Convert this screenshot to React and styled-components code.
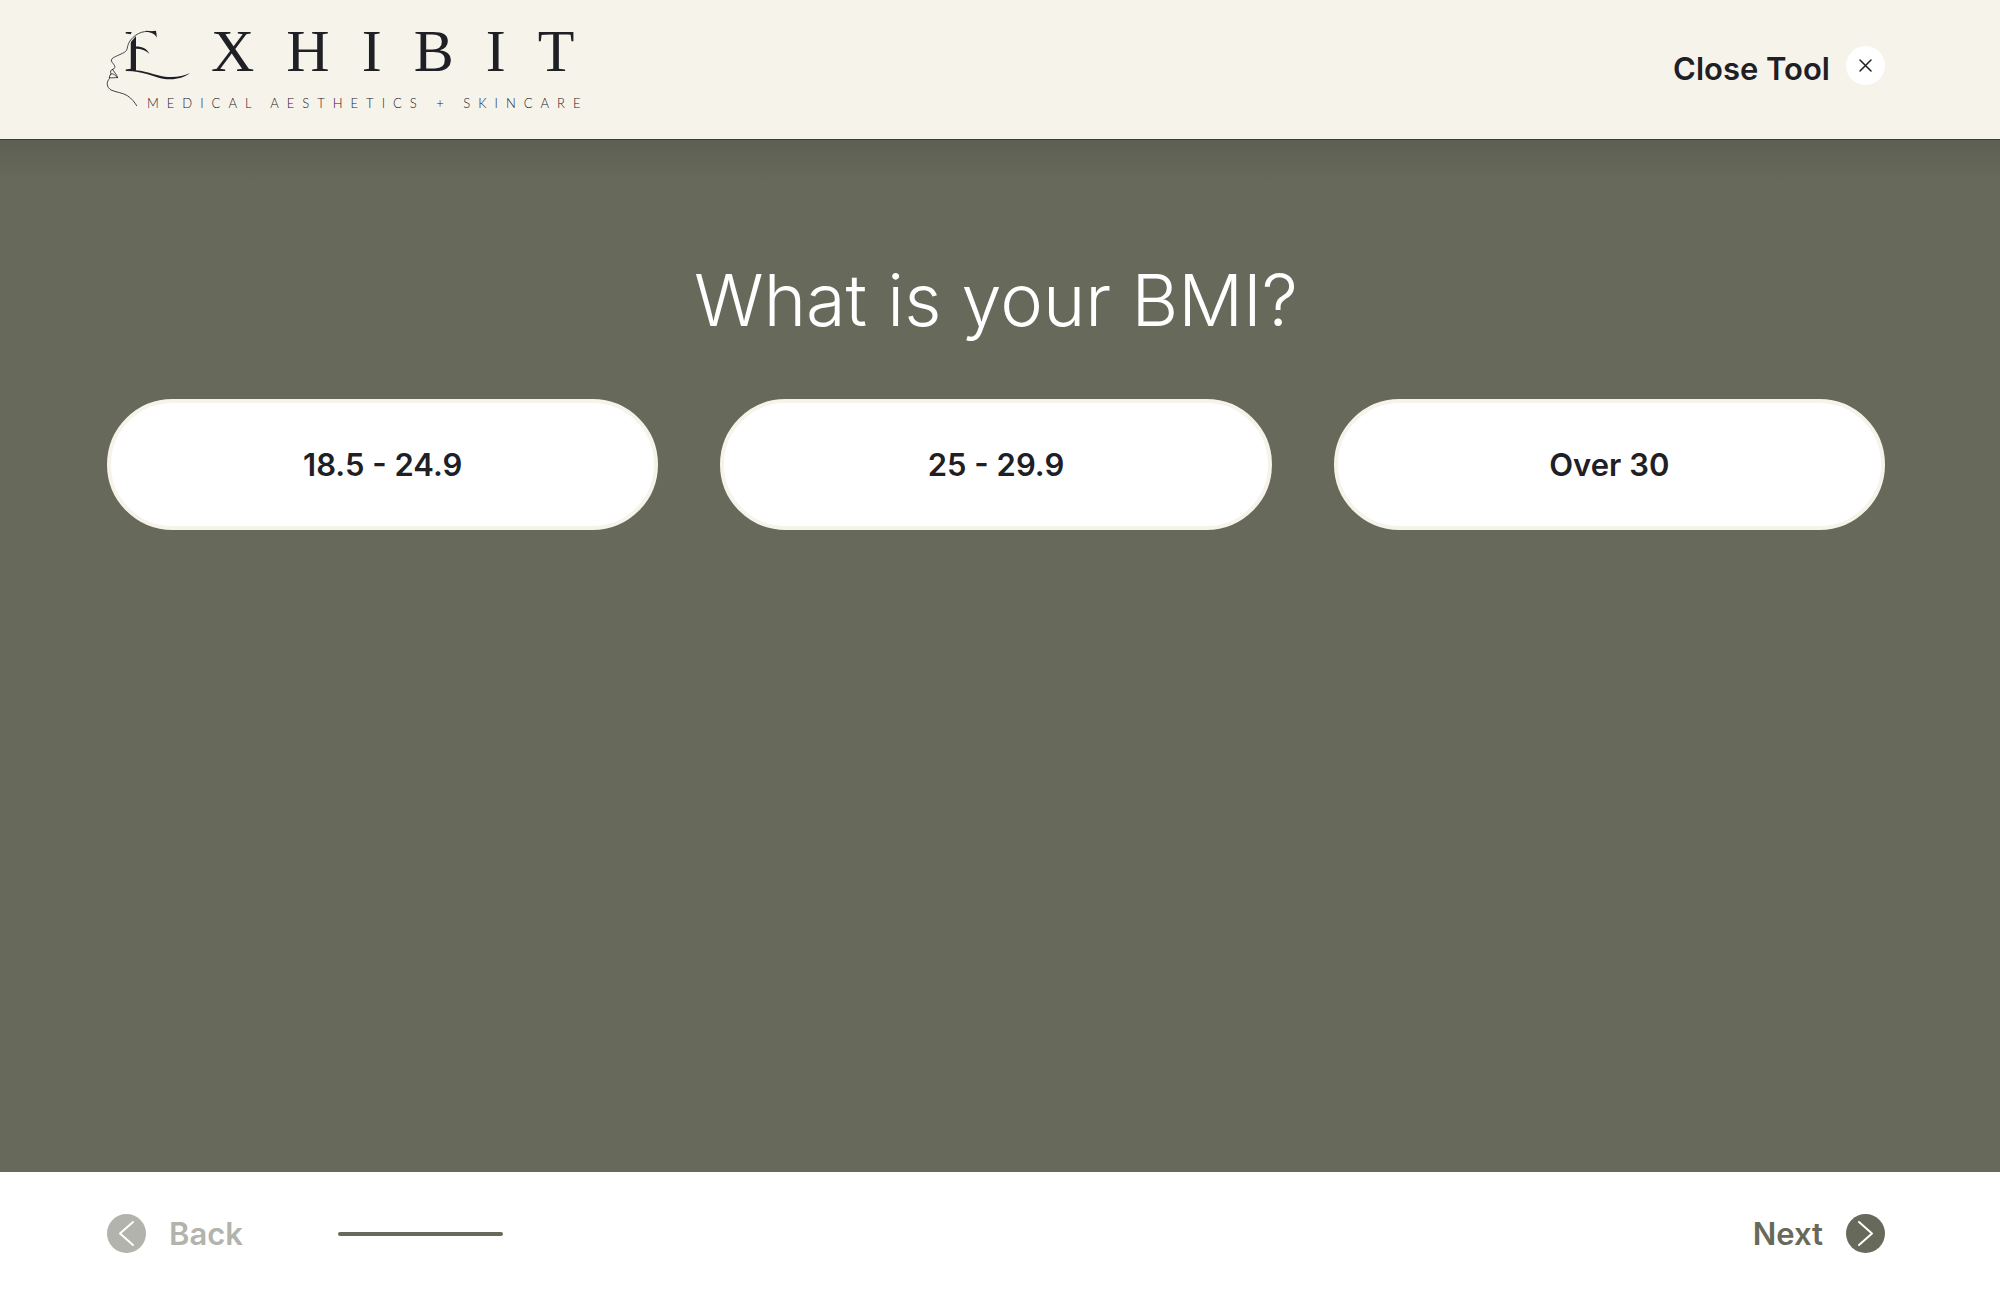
import { useState } from "react";
import styled, { createGlobalStyle } from "styled-components";

const GlobalStyle = createGlobalStyle`
  * {
    box-sizing: border-box;
  }
  body {
    margin: 0;
    font-family: Inter, "Liberation Sans", sans-serif;
    color: #1f2026;
  }
`;

const Page = styled.div`
  min-height: 100vh;
  display: flex;
  flex-direction: column;
`;

const Header = styled.header`
  display: flex;
  justify-content: space-between;
  align-items: flex-start;
  padding: 12px 115px 28px 106px;
  background: #f6f3eb;
`;

const Logo = styled.svg`
  display: block;
  width: 500px;
  height: 99px;
  color: #1f2026;
`;

const Wordmark = styled.text`
  font-family: "Liberation Serif", serif;
  font-size: 60px;
  letter-spacing: 32px;
  fill: currentColor;
`;

const Tagline = styled.text`
  font-family: Lato, sans-serif;
  font-size: 13px;
  font-weight: 300;
  letter-spacing: 8px;
  fill: currentColor;
`;

const NavButton = styled.button`
  display: flex;
  align-items: center;
  gap: ${(props) => props.$gap || "23px"};
  padding: 0;
  border: 0;
  background: none;
  font-family: inherit;
  font-size: 31px;
  font-weight: 600;
  line-height: 38px;
  color: ${(props) => props.$color || "#676a5b"};
  opacity: ${(props) => (props.disabled ? 0.5 : 1)};
  cursor: pointer;
`;

const CloseButton = styled(NavButton)`
  align-items: flex-start;
  margin-top: 34px;
  span {
    padding-top: 4px;
  }
`;

const Circle = styled.svg`
  display: block;
  width: 39px;
  height: 39px;
  flex-shrink: 0;
  border-radius: 50%;
  background: ${(props) => props.$bg || "#676a5b"};
  fill: none;
  stroke: ${(props) => props.$stroke || "#fff"};
  stroke-width: ${(props) => props.$width || 2};
  stroke-linecap: round;
  stroke-linejoin: round;
`;

const Main = styled.main`
  flex: 1;
  padding: 118px 115px 80px 107px;
  border-top: 1px solid #3c3f30;
  background: linear-gradient(#5c5f51, #676a5b 40px);
`;

const Title = styled.h1`
  margin: 0;
  font-size: 72px;
  font-weight: 300;
  line-height: 84px;
  text-align: center;
  color: #fff;
`;

const Options = styled.div`
  display: grid;
  grid-template-columns: repeat(3, 1fr);
  gap: 62px;
  margin-top: 57px;
`;

const Option = styled.button`
  height: 131px;
  border: 4px solid #f6f3eb;
  border-radius: 66px;
  background: #fff;
  font-family: inherit;
  font-size: 31px;
  font-weight: 600;
  color: inherit;
  cursor: pointer;
`;

const Footer = styled.footer`
  display: flex;
  align-items: center;
  padding: 42px 115px 36px 107px;
  background: #fff;
`;

const Track = styled.div`
  flex: 1;
  margin: 0 95px;
`;

const Bar = styled.div`
  height: 4px;
  border-radius: 2px;
  background: #676a5b;
`;

const options = ["18.5 - 24.9", "25 - 29.9", "Over 30"];

const ExhibitLogo = () => (
  <Logo viewBox="0 -16 500 99" role="img" aria-label="Exhibit Medical Aesthetics + Skincare">
    <defs>
      {/* keeps the stem and serifs of the E, the arms are the drawn strokes */}
      <clipPath id="stem">
        <path d="M18 0H28L22 11L18 8Z M30 8V45H18V22L24 15Z" />
      </clipPath>
    </defs>
    <g clipPath="url(#stem)">
      <Wordmark x="18" y="43">E</Wordmark>
    </g>
    <Wordmark x="105" y="43">XHIBIT</Wordmark>
    <g transform="translate(-16 -18) scale(0.3333)" fill="none" stroke="currentColor" strokeLinecap="round">
      <path
        strokeWidth="2.5"
        d="M196 68C165 58 140 68 122 90C110 105 114 118 107 124C98 133 66 140 64 150C63 158 77 164 74 173C73 179 64 177 62 183C60 189 66 190 61 195C55 200 62 203 56 209C49 218 50 232 63 240C78 247 98 248 112 257C126 266 134 277 140 287"
      />
      <path strokeWidth="2.5" d="M67 178C72 184 81 196 83 203C75 202 66 205 58 203M61 194C67 187 74 194 83 203" />
      <path fill="currentColor" stroke="none" d="M168 62C180 64 190 64 198 62L201 83C196 73 186 67 168 65Z" />
      <path fill="currentColor" stroke="none" d="M130 110C155 108 170 115 178 131C164 119 150 115 130 117Z" />
      <path fill="currentColor" stroke="none" d="M110 180C160 177 190 195 225 200C255 203 279 199 300 189C280 205 252 211 218 206C185 200 160 183 110 183Z" />
    </g>
    <Tagline x="41" y="80">MEDICAL AESTHETICS + SKINCARE</Tagline>
  </Logo>
);

const App = () => {
  const [progress] = useState(12.5);

  return (
    <Page>
      <GlobalStyle />
      <Header>
        <ExhibitLogo />
        <CloseButton type="button" $gap="16px" $color="#1f2026">
          <span>Close Tool</span>
          <Circle viewBox="0 0 39 39" $bg="#fff" $stroke="#1f2026" $width={1.5} aria-hidden="true">
            <path d="M14 14L25 25M25 14L14 25" />
          </Circle>
        </CloseButton>
      </Header>
      <Main>
        <Title>What is your BMI?</Title>
        <Options>
          {options.map((option) => (
            <Option key={option} type="button">
              {option}
            </Option>
          ))}
        </Options>
      </Main>
      <Footer>
        <NavButton type="button" disabled>
          <Circle viewBox="0 0 39 39" aria-hidden="true">
            <path d="M26 8L13 19.5L26 31" />
          </Circle>
          Back
        </NavButton>
        <Track>
          <Bar style={{ width: `${progress}%` }} />
        </Track>
        <NavButton type="button">
          Next
          <Circle viewBox="0 0 39 39" aria-hidden="true">
            <path d="M13 8L26 19.5L13 31" />
          </Circle>
        </NavButton>
      </Footer>
    </Page>
  );
};

export default App;
